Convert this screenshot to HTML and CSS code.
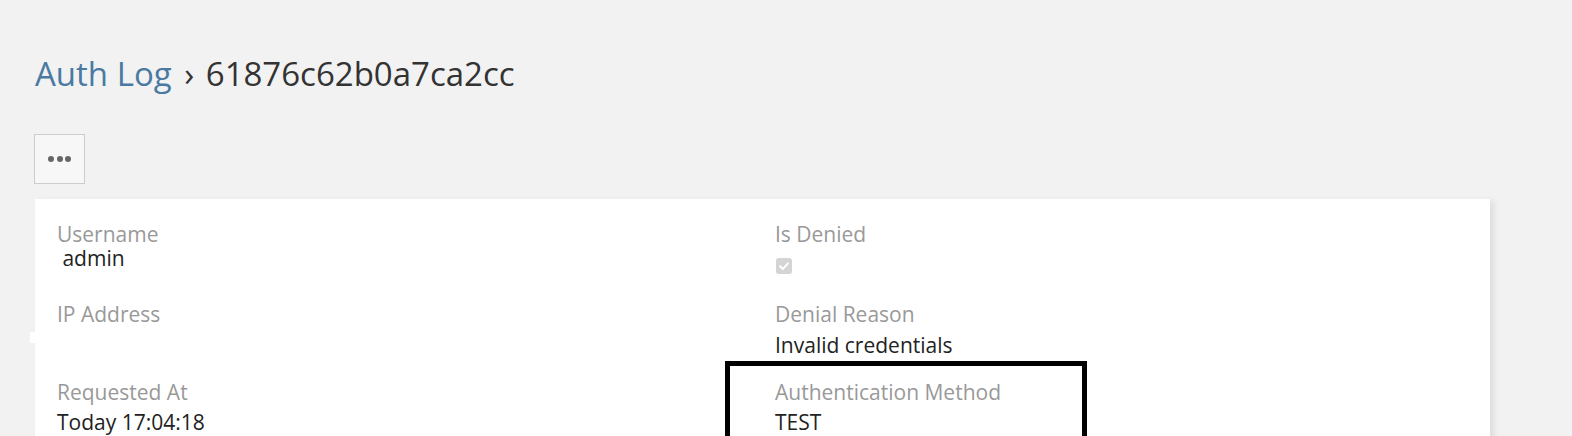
FILE: index.html
```html
<!DOCTYPE html>
<html lang="en">
<head>
<meta charset="utf-8">
<title>Auth Log › 61876c62b0a7ca2cc</title>
<link rel="stylesheet" href="styles.css">
</head>
<body>
<div class="page">
  <h1 class="title"><a class="crumb" href="#">Auth Log</a> <span class="sep">›</span> <span class="current">61876c62b0a7ca2cc</span></h1>
  <div class="toolbar">
    <button class="more" type="button" aria-label="More actions">
      <span class="dot"></span><span class="dot"></span><span class="dot"></span>
    </button>
  </div>
  <div class="card">
    <span class="tab"></span>
    <div class="grid">
      <div class="field">
        <div class="label short">Username</div>
        <div class="value tight"> admin</div>
      </div>
      <div class="field">
        <div class="label">Is Denied</div>
        <div class="value check">
          <span class="checkbox">
            <svg viewBox="0 0 16 16" width="16" height="16"><path d="M4 8.3 L6.8 11 L12 5.4" fill="none" stroke="#ffffff" stroke-width="2" stroke-linecap="round" stroke-linejoin="round"/></svg>
          </span>
        </div>
      </div>
      <div class="field">
        <div class="label">IP Address</div>
        <div class="value"></div>
      </div>
      <div class="field">
        <div class="label">Denial Reason</div>
        <div class="value">Invalid credentials</div>
      </div>
      <div class="field">
        <div class="label">Requested At</div>
        <div class="value">Today 17:04:18</div>
      </div>
      <div class="field">
        <div class="label">Authentication Method</div>
        <div class="value">TEST</div>
      </div>
    </div>
    <div class="highlight"></div>
  </div>
</div>
</body>
</html>
```
FILE: styles.css
```css
html, body {
  margin: 0;
  padding: 0;
  background: #f2f2f2;
  font-family: "Open Sans", "Liberation Sans", sans-serif;
  overflow: hidden;
}

.page {
  padding: 0 82px 0 35px;
}

.title {
  margin: 54px 0 0 0;
  font-size: 33px;
  line-height: 40px;
  font-weight: 400;
  color: #333333;
}

.crumb {
  color: #4a7aa2;
  text-decoration: none;
}

.sep {
  color: #333333;
  margin: 0 3px 0 4px;
}

.toolbar {
  margin-top: 40px;
  display: flex;
}

.more {
  margin-left: -1px;
  width: 51px;
  height: 50px;
  border: 1px solid #cccccc;
  background: #f7f7f7;
  padding: 0;
  display: flex;
  align-items: center;
  justify-content: center;
  gap: 2.5px;
}

.dot {
  width: 6px;
  height: 6px;
  border-radius: 50%;
  background: #666666;
}

.card {
  position: relative;
  margin-top: 15px;
  background: #ffffff;
  box-shadow: 4px 2px 7px rgba(0, 0, 0, 0.09);
  padding: 23px 22px 40px 22px;
}

.tab {
  position: absolute;
  left: -5px;
  top: 133px;
  width: 5px;
  height: 11px;
  background: #ffffff;
}

.grid {
  display: grid;
  grid-template-columns: 718px 1fr;
}

.field {
  padding-bottom: 23px;
}

.label {
  font-size: 21px;
  line-height: 24px;
  color: #999999;
}

.label.short {
  line-height: 22px;
  padding-top: 1px;
}

.value {
  margin-top: 6.5px;
  font-size: 21px;
  line-height: 24px;
  min-height: 24px;
  color: #222222;
}

.value.tight {
  margin-top: 2px;
  line-height: 22px;
  min-height: 22px;
  white-space: pre;
}

.value.check {
  margin-top: 0;
  height: 33px;
  padding-top: 12px;
  box-sizing: border-box;
  padding-left: 1px;
}

.checkbox {
  display: block;
  width: 16px;
  height: 16px;
  border-radius: 3px;
  background: #d4d4d4;
}

.checkbox svg {
  display: block;
}

.highlight {
  position: absolute;
  left: 690px;
  top: 162px;
  width: 352px;
  height: 140px;
  border: 5px solid #000000;
}
```
